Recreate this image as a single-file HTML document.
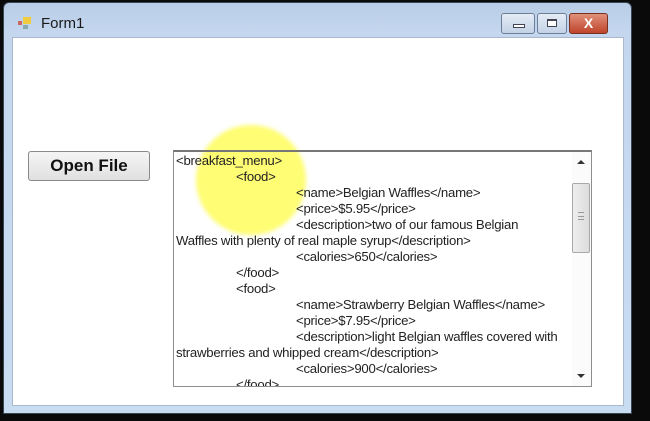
<!DOCTYPE html>
<html><head><meta charset="utf-8"><style>
*{margin:0;padding:0;box-sizing:border-box}
body{width:650px;height:421px;background:#0a0a0a;position:relative;overflow:hidden;font-family:"Liberation Sans",sans-serif}
.win{position:absolute;left:3px;top:2px;width:629px;height:412px;border-radius:6px 6px 0 0;background:linear-gradient(#b9cde6,#c4d7ef 30px,#c8dcf2);border:1px solid #3a4656}
.client{position:absolute;left:8px;top:34px;width:612px;height:369px;background:#fff;border:1px solid #a9b8cc}
.title{position:absolute;left:37px;top:12px;font-size:15px;color:#1a1a1a}
.ico{position:absolute;left:14px;top:14px;width:14px;height:12px}
.tb{position:absolute;top:10px;height:21px;border:1px solid #6d7f98;border-radius:3px;background:linear-gradient(#e4ecf6,#c3d2e6)}
.btn{position:absolute;left:28px;top:151px;width:122px;height:30px;border:1px solid #8a8a8a;border-radius:3px;background:linear-gradient(#f5f5f5,#e0e0e0);font-weight:bold;font-size:17px;text-align:center;line-height:28px;color:#111}
.tx{position:absolute;left:173px;top:150px;width:419px;height:237px;border:1px solid #8d8d8d;border-top:2px solid #777;overflow:hidden}
pre{font-family:"Liberation Sans",sans-serif;font-size:13.2px;line-height:16px;color:#222;position:absolute;left:2px;top:1px;tab-size:60px;-moz-tab-size:60px;letter-spacing:-0.25px}
.sb{position:absolute;right:0;top:0;width:19px;height:100%;background:#fbfbfb}
.th{position:absolute;left:572px;top:183px;width:18px;height:70px;border:1px solid #a8a8a8;border-radius:2px;background:linear-gradient(90deg,#eee,#dcdcdc)}
.glow{position:absolute;left:196px;top:125px;width:110px;height:110px;border-radius:50%;background:rgba(255,252,80,.8);filter:blur(2px)}
</style></head><body>
<div class="win">
<div class="client"></div>
<svg class="ico" viewBox="0 0 14 12"><rect x="0" y="4" width="4" height="4" fill="#c66"/><rect x="5" y="0" width="8" height="7" fill="#f2cc40"/><rect x="5" y="8" width="5" height="4" fill="#8aa"/></svg>
<div class="title">Form1</div>
<div class="tb" style="left:497px;width:34px"><div style="position:absolute;left:11px;top:10px;width:12px;height:4px;border:1px solid #445;background:#fff"></div></div>
<div class="tb" style="left:533px;width:30px"><div style="position:absolute;left:9px;top:5px;width:10px;height:8px;border:1px solid #445;border-top-width:2px;background:#fff"></div></div>
<div class="tb" style="left:565px;width:39px;background:linear-gradient(#e0907a,#c0442c);border-color:#7a3020;color:#fff;font-weight:bold;font-size:14px;text-align:center;line-height:19px">X</div>
</div>
<div class="btn">Open File</div>
<div class="glow"></div>
<div class="tx"><pre>&lt;breakfast_menu&gt;
	&lt;food&gt;
		&lt;name&gt;Belgian Waffles&lt;/name&gt;
		&lt;price&gt;$5.95&lt;/price&gt;
		&lt;description&gt;two of our famous Belgian
Waffles with plenty of real maple syrup&lt;/description&gt;
		&lt;calories&gt;650&lt;/calories&gt;
	&lt;/food&gt;
	&lt;food&gt;
		&lt;name&gt;Strawberry Belgian Waffles&lt;/name&gt;
		&lt;price&gt;$7.95&lt;/price&gt;
		&lt;description&gt;light Belgian waffles covered with
strawberries and whipped cream&lt;/description&gt;
		&lt;calories&gt;900&lt;/calories&gt;
	&lt;/food&gt;</pre>
<div class="sb"><div style="position:absolute;left:5px;top:8px;width:0;height:0;border:4px solid transparent;border-bottom:4px solid #333;border-top:0"></div><div style="position:absolute;left:5px;bottom:8px;width:0;height:0;border:4px solid transparent;border-top:4px solid #333;border-bottom:0"></div></div>
</div>
<div class="th"><div style="position:absolute;left:5px;top:28px;width:6px;height:8px;border-top:1px solid #999;border-bottom:1px solid #999"><div style="margin-top:3px;border-top:1px solid #999"></div></div></div>
</body></html>
